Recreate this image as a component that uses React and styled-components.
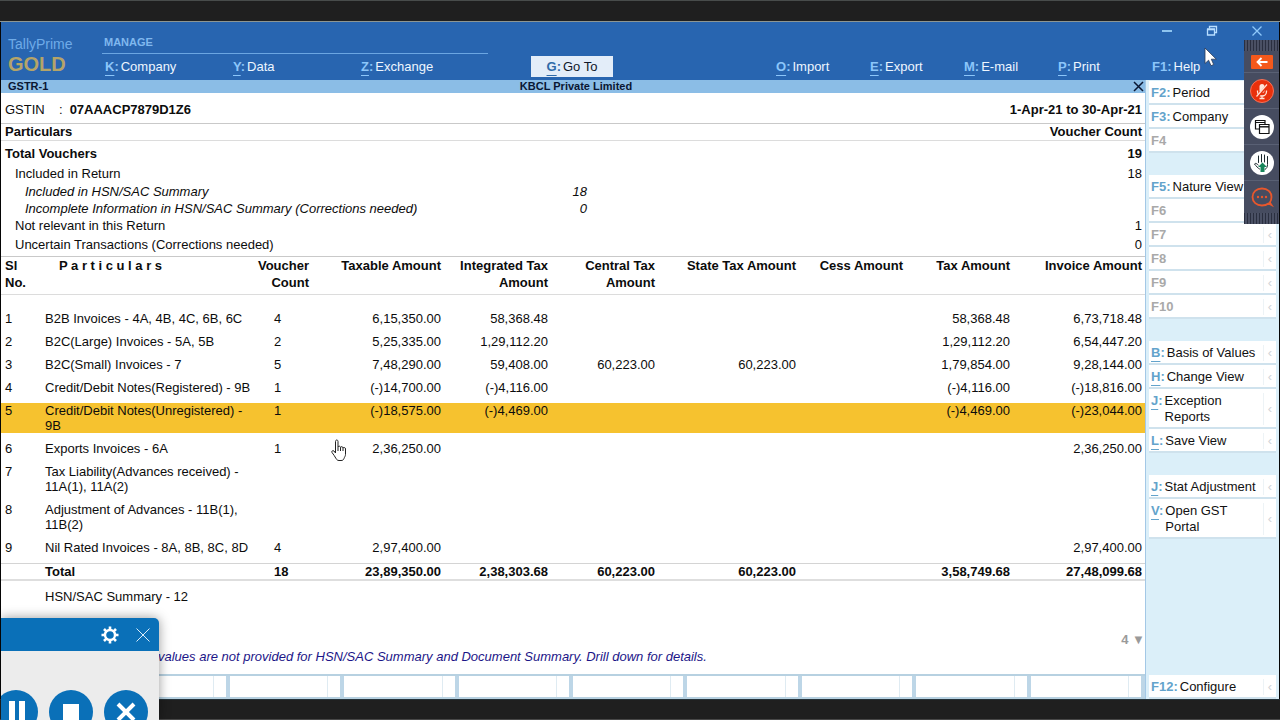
import React from "react";
import styled, { createGlobalStyle, css } from "styled-components";

const menuLeft = [
  { hotkey: "K", label: "Company" },
  { hotkey: "Y", label: "Data" },
  { hotkey: "Z", label: "Exchange" },
];

const menuRight = [
  { hotkey: "O", label: "Import" },
  { hotkey: "E", label: "Export" },
  { hotkey: "M", label: "E-mail" },
  { hotkey: "P", label: "Print" },
  { hotkey: "F1", label: "Help", plain: true },
];

const sideGroups = [
  [
    { hotkey: "F2", label: "Period", plain: true },
    { hotkey: "F3", label: "Company", plain: true },
    { hotkey: "F4", off: true },
  ],
  [
    { hotkey: "F5", label: "Nature View", plain: true },
    { hotkey: "F6", off: true },
    { hotkey: "F7", off: true },
    { hotkey: "F8", off: true },
    { hotkey: "F9", off: true },
    { hotkey: "F10", off: true },
  ],
  [
    { hotkey: "B", label: "Basis of Values" },
    { hotkey: "H", label: "Change View" },
    { hotkey: "J", label: "Exception Reports" },
    { hotkey: "L", label: "Save View" },
  ],
  [
    { hotkey: "J", label: "Stat Adjustment" },
    { hotkey: "V", label: "Open GST Portal" },
  ],
];

const columns = [
  "Taxable Amount",
  "Integrated Tax Amount",
  "Central Tax Amount",
  "State Tax Amount",
  "Cess Amount",
  "Tax Amount",
  "Invoice Amount",
];

const rows = [
  ["B2B Invoices - 4A, 4B, 4C, 6B, 6C", "4", "6,15,350.00", "58,368.48", "", "", "", "58,368.48", "6,73,718.48"],
  ["B2C(Large) Invoices - 5A, 5B", "2", "5,25,335.00", "1,29,112.20", "", "", "", "1,29,112.20", "6,54,447.20"],
  ["B2C(Small) Invoices - 7", "5", "7,48,290.00", "59,408.00", "60,223.00", "60,223.00", "", "1,79,854.00", "9,28,144.00"],
  ["Credit/Debit Notes(Registered) - 9B", "1", "(-)14,700.00", "(-)4,116.00", "", "", "", "(-)4,116.00", "(-)18,816.00"],
  ["Credit/Debit Notes(Unregistered) - 9B", "1", "(-)18,575.00", "(-)4,469.00", "", "", "", "(-)4,469.00", "(-)23,044.00"],
  ["Exports Invoices - 6A", "1", "2,36,250.00", "", "", "", "", "", "2,36,250.00"],
  ["Tax Liability(Advances received) - 11A(1), 11A(2)", "", "", "", "", "", "", "", ""],
  ["Adjustment of Advances - 11B(1), 11B(2)", "", "", "", "", "", "", "", ""],
  ["Nil Rated Invoices - 8A, 8B, 8C, 8D", "4", "2,97,400.00", "", "", "", "", "", "2,97,400.00"],
];

const totals = ["23,89,350.00", "2,38,303.68", "60,223.00", "60,223.00", "", "3,58,749.68", "27,48,099.68"];

const selectedRow = 4;

function Hotkey({ item, tone }) {
  return (
    <>
      <KeyName $tone={tone}>
        <KeyLetter $plain={item.plain || item.off}>{item.hotkey}</KeyLetter>
        {!item.off && ":"}
      </KeyName>
      {item.label && <span className="label">{item.label}</span>}
    </>
  );
}

function SideItem({ item }) {
  return (
    <SideButton disabled={item.off}>
      <Hotkey item={item} tone={item.off ? "off" : "side"} />
      <Chevron aria-hidden="true">‹</Chevron>
    </SideButton>
  );
}

function Header() {
  return (
    <TopBar>
      <Brand>
        <span>TallyPrime</span>
        <strong>GOLD</strong>
      </Brand>
      <MenuArea>
        <MenuTop>
          <MenuTitle>MANAGE</MenuTitle>
          <WindowControls>
            <button aria-label="Minimize">
              <svg width="12" height="12" viewBox="0 0 12 12">
                <path d="M1 6h10" stroke="#a9ddff" strokeWidth="1.6" />
              </svg>
            </button>
            <button aria-label="Restore">
              <svg width="12" height="12" viewBox="0 0 12 12" fill="none" stroke="#b9deff">
                <path d="M3.5 3.5V1.5h7v6h-2" strokeWidth="1.3" />
                <path d="M1.5 4.5h7v5.5h-7z" strokeWidth="1.3" />
                <path d="M1 4.2h8" strokeWidth="1.8" />
              </svg>
            </button>
            <button aria-label="Close">
              <svg width="12" height="12" viewBox="0 0 12 12">
                <path d="M1.5 1.5l9 9m0-9l-9 9" stroke="#8fc9fb" strokeWidth="1.3" />
              </svg>
            </button>
          </WindowControls>
        </MenuTop>
        <MenuRow>
          <MenuGroup $step={128}>
            {menuLeft.map((item) => (
              <MenuButton key={item.hotkey}>
                <Hotkey item={item} tone="menu" />
              </MenuButton>
            ))}
          </MenuGroup>
          <GoTo>
            <Hotkey item={{ hotkey: "G", label: "Go To" }} tone="goto" />
          </GoTo>
          <MenuGroup $step={94}>
            {menuRight.map((item) => (
              <MenuButton key={item.hotkey}>
                <Hotkey item={item} tone="menu" />
              </MenuButton>
            ))}
          </MenuGroup>
        </MenuRow>
      </MenuArea>
    </TopBar>
  );
}

function Summary() {
  return (
    <SummaryBlock>
      <SummaryRow $tall $bold>
        <span>Total Vouchers</span>
        <span>19</span>
      </SummaryRow>
      <SummaryRow $tall $level={1}>
        <span>Included in Return</span>
        <span>18</span>
      </SummaryRow>
      <SummaryRow $level={2}>
        <span>Included in HSN/SAC Summary</span>
        <span>18</span>
      </SummaryRow>
      <SummaryRow $level={2}>
        <span>Incomplete Information in HSN/SAC Summary (Corrections needed)</span>
        <span>0</span>
      </SummaryRow>
      <SummaryRow $level={1}>
        <span>Not relevant in this Return</span>
        <span>1</span>
      </SummaryRow>
      <SummaryRow $tall $level={1}>
        <span>Uncertain Transactions (Corrections needed)</span>
        <span>0</span>
      </SummaryRow>
    </SummaryBlock>
  );
}

function ReturnTable() {
  return (
    <Table>
      <colgroup>
        <col style={{ width: 44 }} />
        <col />
        <col style={{ width: 54 }} />
        <col style={{ width: 132 }} />
        <col style={{ width: 107 }} />
        <col style={{ width: 107 }} />
        <col style={{ width: 141 }} />
        <col style={{ width: 107 }} />
        <col style={{ width: 107 }} />
        <col style={{ width: 135 }} />
      </colgroup>
      <thead>
        <tr>
          <HeadCell $left>Sl No.</HeadCell>
          <HeadCell $left $indent>
            P a r t i c u l a r s
          </HeadCell>
          <HeadCell>Voucher Count</HeadCell>
          {columns.map((name) => (
            <HeadCell key={name}>{name}</HeadCell>
          ))}
        </tr>
      </thead>
      <tbody>
        {rows.map(([name, count, ...amounts], i) => (
          <Row key={name} $selected={i === selectedRow} $first={i === 0}>
            <Cell $left>{i + 1}</Cell>
            <Cell $name>{name}</Cell>
            <Cell $count>{count}</Cell>
            {amounts.map((amount, n) => (
              <Cell key={n}>{amount}</Cell>
            ))}
          </Row>
        ))}
        <TotalRow>
          <Cell $left />
          <Cell $name>Total</Cell>
          <Cell $count>18</Cell>
          {totals.map((amount, n) => (
            <Cell key={n}>{amount}</Cell>
          ))}
        </TotalRow>
        <Row>
          <Cell $left />
          <Cell $name>HSN/SAC Summary - 12</Cell>
          <Cell colSpan={8} />
        </Row>
      </tbody>
    </Table>
  );
}

function MeetingBar() {
  return (
    <MeetingTools>
      <Grip />
      <ToolButton $short aria-label="Collapse">
        <svg width="22" height="14" viewBox="0 0 22 14">
          <rect width="22" height="14" rx="1" fill="#f4591c" />
          <path d="M16.500 7H6.500M10.500 3L6.500 7l4 4" fill="none" stroke="#fff" strokeWidth="1.8" />
        </svg>
      </ToolButton>
      <ToolButton aria-label="Unmute">
        <svg width="26" height="26" viewBox="0 0 26 26">
          <circle cx="13" cy="13" r="11.500" fill="#e8300c" stroke="#f4735a" />
          <rect x="10.500" y="6" width="5" height="9" rx="2.500" fill="#ffe3d8" />
          <path d="M8.500 12.500v1a4.500 4.500 0 0 0 9 0v-1M13 18v2.500M10.500 20.500h5" fill="none" stroke="#ffe3d8" strokeWidth="1.300" />
          <path d="M8 19.500L18.500 7" stroke="#e8300c" strokeWidth="2.600" />
          <path d="M7.500 18.500L18 6.500" stroke="#ffe3d8" strokeWidth="1.200" />
        </svg>
      </ToolButton>
      <ToolButton aria-label="Share screen">
        <svg width="26" height="26" viewBox="0 0 26 26">
          <circle cx="13" cy="13" r="12" fill="#fff" />
          <path d="M6.500 6.500h9.500v8.500h-9.500zM6.500 8.500h9.500" fill="none" stroke="#111" strokeWidth="1.200" />
          <path d="M10.500 10.500h9.500v9h-9.500z" fill="#fff" stroke="#111" strokeWidth="1.200" />
          <path d="M10.500 12.800h9.500" stroke="#111" strokeWidth="1.400" />
        </svg>
      </ToolButton>
      <ToolButton aria-label="Raise hand">
        <svg width="26" height="26" viewBox="0 0 26 26">
          <circle cx="13" cy="13" r="12" fill="#fff" />
          <path
            d="M10.500 19c-1.500-.8-3.500-3-5-5 1-1.300 2.300-.3 3.700 1M9.500 12.500V6m3 6V4.500m3 7.500V5m3 1.500v8c0 2.500-.8 4-2.500 5"
            fill="none"
            stroke="#1c2a2e"
            strokeLinecap="round"
          />
          <path d="M13.500 12.500l4.500 4.500h-2.500v5h-4v-5H9z" fill="#17855a" />
        </svg>
      </ToolButton>
      <ToolButton $last aria-label="Chat">
        <svg width="24" height="22" viewBox="0 0 24 22">
          <path
            d="M18.500 17.500c-1.700 1.300-3.900 2-6.500 2-5.500 0-9.500-3.500-9.500-8.500S6.500 2.500 12 2.500s9.500 3.500 9.500 8.500c0 2.200-.7 4-1.700 5.400l1.700 2.600z"
            fill="none"
            stroke="#e8572c"
            strokeWidth="1.800"
          />
          <circle cx="8" cy="11" r="1.200" fill="#e8572c" />
          <circle cx="12" cy="11" r="1.200" fill="#e8572c" />
          <circle cx="16" cy="11" r="1.200" fill="#e8572c" />
        </svg>
      </ToolButton>
      <Grip />
    </MeetingTools>
  );
}

function Recorder() {
  return (
    <RecorderBox>
      <RecorderTitle>
        <button aria-label="Settings">
          <svg width="18" height="18" viewBox="0 0 18 18">
            <circle cx="9" cy="9" r="5" fill="none" stroke="#fff" strokeWidth="2.400" />
            {[0, 45, 90, 135, 180, 225, 270, 315].map((angle) => (
              <path key={angle} d="M9 .5v3.300" stroke="#fff" strokeWidth="2.600" transform={`rotate(${angle} 9 9)`} />
            ))}
          </svg>
        </button>
        <button aria-label="Close recorder">
          <svg width="14" height="14" viewBox="0 0 14 14">
            <path d="M.5.5l13 13m0-13l-13 13" stroke="#d9ecfa" />
          </svg>
        </button>
      </RecorderTitle>
      <RecorderButtons>
        <button aria-label="Pause">
          <svg width="44" height="44" viewBox="0 0 44 44">
            <path d="M15 11h6v22h-6zM25 11h6v22h-6z" fill="#fff" stroke="none" />
          </svg>
        </button>
        <button aria-label="Stop">
          <svg width="44" height="44" viewBox="0 0 44 44">
            <path d="M14 14h16v16H14z" fill="#fff" />
          </svg>
        </button>
        <button aria-label="Cancel">
          <svg width="44" height="44" viewBox="0 0 44 44">
            <path d="M14 14l16 16m0-16L14 30" stroke="#fff" strokeWidth="4" />
          </svg>
        </button>
      </RecorderButtons>
    </RecorderBox>
  );
}

export default function App() {
  return (
    <Frame>
      <GlobalStyle />
      <Desktop />
      <Header />
      <Workspace>
        <Report>
          <TitleBar>
            <span>GSTR-1</span>
            <strong>KBCL Private Limited</strong>
            <button aria-label="Close report">
              <svg width="11" height="11" viewBox="0 0 11 11">
                <path d="M1 1l9 9m0-9l-9 9" stroke="#0a1733" strokeWidth="1.500" />
              </svg>
            </button>
          </TitleBar>
          <GstinRow>
            <span>GSTIN</span>
            <span>:</span>
            <strong>07AAACP7879D1Z6</strong>
            <strong>1-Apr-21 to 30-Apr-21</strong>
          </GstinRow>
          <CaptionRow>
            <span>Particulars</span>
            <span>Voucher Count</span>
          </CaptionRow>
          <Summary />
          <ReturnTable />
          <MoreRows>4 ▼</MoreRows>
          <Note>values are not provided for HSN/SAC Summary and Document Summary. Drill down for details.</Note>
          <BottomKeys>
            {Array.from({ length: 10 }, (_, i) => (
              <BottomKey key={i} disabled aria-label="Unassigned" />
            ))}
          </BottomKeys>
        </Report>
        <SideBar>
          {sideGroups.map((group, i) => (
            <SideGroup key={i}>
              {group.map((item) => (
                <SideItem key={item.hotkey} item={item} />
              ))}
            </SideGroup>
          ))}
          <SideGroup $end>
            <SideItem item={{ hotkey: "F12", label: "Configure", plain: true }} />
          </SideGroup>
        </SideBar>
      </Workspace>
      <Desktop $bottom />
      <MeetingBar />
      <Recorder />
      <ArrowCursor width="14" height="20" viewBox="0 0 14 20">
        <path d="M1 1v15.500l3.600-3.300 2.400 5.500 2.700-1.200-2.400-5.300h5z" fill="#fff" stroke="#2b3a55" strokeWidth=".8" />
      </ArrowCursor>
      <HandCursor width="18" height="23" viewBox="0 0 18 23">
        <path
          d="M5.500 14V2.500c0-2 2.500-2 2.500 0V8c.5-1.300 2.500-1 2.500.5.500-1.300 2.500-1 2.500.5.700-1 2.500-.7 2.500 1v5.500c0 1.500-1 2.500-1.500 4-.5 1.500-1.500 2-3 2H9c-1.500 0-2.500-1-3-2-1-2-2.500-4-4-6-.8-1.200.7-2.500 2-1.500z"
          fill="#fff"
          stroke="#222"
        />
        <path d="M8 8v4M10.500 8.500V12M13 9v3" stroke="#222" />
      </HandCursor>
    </Frame>
  );
}

const GlobalStyle = createGlobalStyle`
  * {
    box-sizing: border-box;
  }
  body {
    margin: 0;
    background: #1f1f1f;
    color: #0c0c0c;
    font: 13px/15px "Liberation Sans", Arial, sans-serif;
  }
  button {
    margin: 0;
    padding: 0;
    border: 0;
    background: none;
    color: inherit;
    font: inherit;
    text-align: left;
  }
  svg {
    display: block;
  }
`;

const Frame = styled.div`
  position: relative;
  display: flex;
  flex-direction: column;
  min-height: 100vh;
  padding: 0 1px;
  background: #050505;
  overflow: hidden;
`;

const Desktop = styled.div`
  flex: none;
  height: 22px;
  margin: 0 -1px;
  background: #1f1f1f;
  border-top: 1px solid #484c4b;
  border-bottom: 1px solid #8d9693;
  ${({ $bottom }) =>
    $bottom &&
    css`
      height: 21px;
      border-top-color: #26333a;
      border-bottom-color: #484848;
    `}
`;

const TopBar = styled.header`
  display: flex;
  height: 58px;
  background: #2865b0;
`;

const Brand = styled.div`
  display: flex;
  flex-direction: column;
  width: 101px;
  padding: 13px 0 0 7px;
  color: #6fabe8;
  font-size: 14px;
  line-height: 18px;
  strong {
    color: #b5a469;
    font-size: 20px;
    line-height: 23px;
  }
`;

const MenuArea = styled.div`
  flex: 1;
`;

const MenuTop = styled.div`
  display: flex;
  justify-content: space-between;
  height: 32px;
`;

const MenuTitle = styled.div`
  width: 386px;
  padding: 13px 2px 0;
  border-bottom: 1px solid #6ba6e2;
  color: #80b8ee;
  font-size: 11px;
  font-weight: bold;
`;

const WindowControls = styled.div`
  display: flex;
  gap: 33px;
  padding: 3px 16px 0 0;
  button {
    height: 12px;
  }
`;

const MenuRow = styled.nav`
  display: flex;
  align-items: center;
  height: 25px;
  padding-left: 3px;
`;

const MenuGroup = styled.div`
  display: flex;
  button {
    width: ${({ $step }) => $step}px;
  }
  &:first-child {
    flex: none;
    width: 426px;
  }
  &:last-child {
    margin-left: auto;
    button:last-child {
      width: 127px;
    }
  }
`;

const MenuButton = styled.button`
  display: flex;
  gap: 2px;
  color: #eef6ff;
`;

const GoTo = styled.button`
  display: flex;
  justify-content: center;
  align-items: center;
  gap: 2px;
  width: 82px;
  height: 21px;
  background: #e3edf9;
  color: #10182a;
`;

const keyColors = {
  menu: "#8cc6fa",
  goto: "#2f6aa8",
  side: "#63a3cb",
  off: "#a9a9a9",
};

const KeyName = styled.span`
  color: ${({ $tone }) => keyColors[$tone]};
  font-weight: bold;
`;

const KeyLetter = styled.span`
  text-decoration: ${({ $plain }) => ($plain ? "none" : "underline")};
  text-decoration-thickness: 1px;
  text-underline-offset: 4px;
`;

const Workspace = styled.div`
  flex: 1;
  display: flex;
`;

const Report = styled.main`
  flex: 1;
  display: flex;
  flex-direction: column;
  min-width: 0;
  background: #fff;
`;

const TitleBar = styled.div`
  display: grid;
  grid-template-columns: 1fr auto 1fr;
  align-items: center;
  height: 13px;
  padding: 0 1px 0 7px;
  background: #8bbde6;
  color: #0a1733;
  font-size: 11px;
  line-height: 13px;
  font-weight: bold;
  button {
    justify-self: end;
  }
`;

const GstinRow = styled.div`
  display: flex;
  align-items: center;
  height: 31px;
  padding: 2px 3px 0 4px;
  border-bottom: 1px solid #c9c9c9;
  span:first-child {
    width: 54px;
  }
  strong {
    margin-left: 7px;
  }
  strong:last-child {
    margin-left: auto;
  }
`;

const CaptionRow = styled.div`
  display: flex;
  justify-content: space-between;
  padding: 0 3px 1px 4px;
  border-bottom: 1px solid #dcdcdc;
  font-weight: bold;
`;

const SummaryBlock = styled.section`
  padding: 2px 3px 2px 4px;
`;

const SummaryRow = styled.div`
  display: grid;
  grid-template-columns: ${({ $level }) => ($level === 2 ? "530px 52px" : "1fr auto")};
  align-items: center;
  height: ${({ $tall }) => ($tall ? 20 : 17)}px;
  font-weight: ${({ $bold }) => ($bold ? "bold" : "normal")};
  font-style: ${({ $level }) => ($level === 2 ? "italic" : "normal")};
  span:first-child {
    padding-left: ${({ $level = 0 }) => $level * 10}px;
  }
  span:last-child {
    text-align: right;
  }
`;

const Table = styled.table`
  width: 100%;
  table-layout: fixed;
  border-spacing: 0 8px;
  margin: -8px 0;
`;

const HeadCell = styled.th`
  height: 39px;
  padding: ${({ $indent }) => ($indent ? "0 0 3px 14px" : "0 0 3px")};
  border-top: 1px solid #c9c9c9;
  border-bottom: 1px solid #dcdcdc;
  line-height: 17px;
  text-align: ${({ $left }) => ($left ? "left" : "right")};
  vertical-align: top;
  &:first-child {
    padding-left: 4px;
    padding-right: 12px;
  }
  &:last-child {
    padding-right: 3px;
  }
`;

const Cell = styled.td`
  padding: 0;
  text-align: ${({ $left, $name, $count }) => ($left || $name || $count ? "left" : "right")};
  vertical-align: top;
  ${({ $count }) => $count && "padding-left: 19px;"}
  ${({ $left }) => $left && "padding-left: 4px;"}
  &:last-child {
    padding-right: 3px;
  }
`;

const Row = styled.tr`
  background: ${({ $selected }) => ($selected ? "#f6c22f" : "none")};
  td {
    ${({ $first }) => $first && "padding-top: 8px;"}
  }
`;

const TotalRow = styled.tr`
  font-weight: bold;
  td {
    border-top: 1px solid #d4d4d4;
    border-bottom: 2px solid #dedede;
  }
`;

const MoreRows = styled.div`
  margin-top: auto;
  color: #9a9a9a;
  font-weight: bold;
  line-height: 17px;
  text-align: right;
`;

const Note = styled.p`
  margin: 0 0 9px;
  padding-left: 157px;
  color: #1c1688;
  font-style: italic;
  line-height: 17px;
`;

const BottomKeys = styled.div`
  display: flex;
  height: 25px;
  border-top: 2px solid #b7d1e1;
  border-bottom: 2px solid #b7d1e1;
`;

const BottomKey = styled.button`
  flex: 1;
  border-right: 4px solid #bdd6e7;
  background: linear-gradient(#dfebf2, #dfebf2) right 12px top 0 / 1px 100% no-repeat #fff;
`;

const SideBar = styled.aside`
  flex: none;
  display: flex;
  flex-direction: column;
  gap: 22px;
  width: 134px;
  padding: 1px 3px 0;
  border-left: 1px solid #a3c8e6;
  background: #dbeff9;
`;

const SideGroup = styled.div`
  display: flex;
  flex-direction: column;
  margin-top: ${({ $end }) => ($end ? "auto" : 0)};
`;

const SideButton = styled.button`
  display: flex;
  gap: 2px;
  padding: 4px 0 2px 2px;
  border-bottom: 2px solid #cfe2ed;
  background: #fff;
  color: #111;
  line-height: 16px;
  .label {
    flex: 1;
    min-width: 0;
  }
`;

const Chevron = styled.span`
  display: flex;
  justify-content: center;
  align-items: center;
  width: 13px;
  margin-left: auto;
  border-left: 1px solid #edf3f6;
  color: #cfd4d7;
`;

const MeetingTools = styled.div`
  position: absolute;
  top: 40px;
  right: 1px;
  width: 35px;
  background: #464c60;
`;

const Grip = styled.div`
  height: 11px;
  background: repeating-linear-gradient(90deg, #2a2f40 0 1px, #4a5064 1px 3px);
`;

const ToolButton = styled.button`
  display: flex;
  justify-content: center;
  align-items: center;
  width: 100%;
  height: ${({ $short, $last }) => ($short ? 22 : $last ? 32 : 36)}px;
  border-bottom: ${({ $last }) => ($last ? 0 : 1)}px solid #596074;
`;

const RecorderBox = styled.div`
  position: absolute;
  left: 1px;
  bottom: 0;
  width: 158px;
  height: 102px;
  overflow: hidden;
  border-radius: 0 5px 0 0;
  background: #ececec;
  box-shadow: 0 0 12px rgba(0, 0, 0, 0.4);
`;

const RecorderTitle = styled.div`
  display: flex;
  justify-content: flex-end;
  align-items: center;
  gap: 17px;
  height: 33px;
  padding-right: 9px;
  background: #0a70b8;
`;

const RecorderButtons = styled.div`
  display: flex;
  justify-content: flex-end;
  gap: 11px;
  padding: 39px 11px 0 0;
  button {
    flex: none;
    border-radius: 50%;
    background: #0a70b8;
  }
`;

const ArrowCursor = styled.svg`
  position: absolute;
  top: 47px;
  right: 62px;
`;

const HandCursor = styled.svg`
  position: absolute;
  top: 439px;
  left: 330px;
`;
